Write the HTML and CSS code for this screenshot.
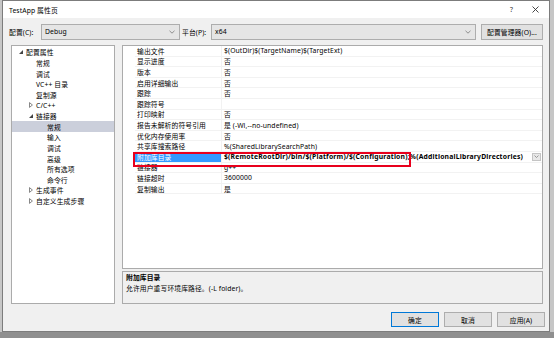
FILE: index.html
```html
<!DOCTYPE html>
<html lang="zh-CN">
<head>
<meta charset="utf-8">
<title>TestApp 属性页</title>
<link rel="stylesheet" href="styles.css">
</head>
<body>
<div class="screen">
  <div class="window">
    <div class="titlebar">
      <span class="title">TestApp 属性页</span>
      <span class="help">?</span>
      <svg class="close" width="7" height="7" viewBox="0 0 7 7"><path d="M0.5 0.5L6.5 6.5M6.5 0.5L0.5 6.5" stroke="#333" stroke-width="0.9" fill="none"/></svg>
    </div>
    <div class="config-row">
      <span class="lbl lbl-config">配置(C):</span>
      <div class="combo combo-config"><span>Debug</span><svg class="chev" width="6" height="4" viewBox="0 0 6 4"><path d="M0.5 0.8L3 3.2L5.5 0.8" stroke="#777" stroke-width="0.8" fill="none"/></svg></div>
      <span class="lbl lbl-platform">平台(P):</span>
      <div class="combo combo-platform"><span>x64</span><svg class="chev" width="6" height="4" viewBox="0 0 6 4"><path d="M0.5 0.8L3 3.2L5.5 0.8" stroke="#777" stroke-width="0.8" fill="none"/></svg></div>
      <div class="btn btn-cfgmgr">配置管理器(O)...</div>
    </div>
    <div class="main">
      <div class="tree">
        <div class="node l0"><span class="tg"><svg width="4" height="4" viewBox="0 0 4 4"><path d="M4 0L4 4L0 4Z" fill="#444"/></svg></span>配置属性</div>
        <div class="node l1"><span class="tg"></span>常规</div>
        <div class="node l1"><span class="tg"></span>调试</div>
        <div class="node l1"><span class="tg"></span>VC++ 目录</div>
        <div class="node l1"><span class="tg"></span>复制源</div>
        <div class="node l1"><span class="tg"><svg width="4" height="6" viewBox="0 0 4 6"><path d="M0.5 0.6L3.4 3L0.5 5.4Z" fill="none" stroke="#555" stroke-width="0.7"/></svg></span>C/C++</div>
        <div class="node l1"><span class="tg"><svg width="4" height="4" viewBox="0 0 4 4"><path d="M4 0L4 4L0 4Z" fill="#444"/></svg></span>链接器</div>
        <div class="node l2 sel"><span class="tg"></span>常规</div>
        <div class="node l2"><span class="tg"></span>输入</div>
        <div class="node l2"><span class="tg"></span>调试</div>
        <div class="node l2"><span class="tg"></span>高级</div>
        <div class="node l2"><span class="tg"></span>所有选项</div>
        <div class="node l2"><span class="tg"></span>命令行</div>
        <div class="node l1"><span class="tg"><svg width="4" height="6" viewBox="0 0 4 6"><path d="M0.5 0.6L3.4 3L0.5 5.4Z" fill="none" stroke="#555" stroke-width="0.7"/></svg></span>生成事件</div>
        <div class="node l1"><span class="tg"><svg width="4" height="6" viewBox="0 0 4 6"><path d="M0.5 0.6L3.4 3L0.5 5.4Z" fill="none" stroke="#555" stroke-width="0.7"/></svg></span>自定义生成步骤</div>
      </div>
      <div class="right">
        <div class="grid">
          <div class="row"><span class="gut"></span><span class="name">输出文件</span><span class="val">$(OutDir)$(TargetName)$(TargetExt)</span></div>
          <div class="row"><span class="gut"></span><span class="name">显示进度</span><span class="val">否</span></div>
          <div class="row"><span class="gut"></span><span class="name">版本</span><span class="val">否</span></div>
          <div class="row"><span class="gut"></span><span class="name">启用详细输出</span><span class="val">否</span></div>
          <div class="row"><span class="gut"></span><span class="name">跟踪</span><span class="val">否</span></div>
          <div class="row"><span class="gut"></span><span class="name">跟踪符号</span><span class="val"></span></div>
          <div class="row"><span class="gut"></span><span class="name">打印映射</span><span class="val">否</span></div>
          <div class="row"><span class="gut"></span><span class="name">报告未解析的符号引用</span><span class="val">是 (-Wl,--no-undefined)</span></div>
          <div class="row"><span class="gut"></span><span class="name">优化内存使用率</span><span class="val">否</span></div>
          <div class="row"><span class="gut"></span><span class="name">共享库搜索路径</span><span class="val">%(SharedLibrarySearchPath)</span></div>
          <div class="row sel"><span class="gut"></span><span class="name">附加库目录</span><span class="val"><span class="bold-val">$(RemoteRootDir)/bin/$(Platform)/$(Configuration);%(AdditionalLibraryDirectories)</span><span class="dd"><svg width="5" height="3" viewBox="0 0 5 3"><path d="M0.5 0.5L2.5 2.5L4.5 0.5" stroke="#777" stroke-width="0.7" fill="none"/></svg></span></span></div>
          <div class="row"><span class="gut"></span><span class="name">链接器</span><span class="val">g++</span></div>
          <div class="row"><span class="gut"></span><span class="name">链接超时</span><span class="val">3600000</span></div>
          <div class="row"><span class="gut"></span><span class="name">复制输出</span><span class="val">是</span></div>
          <div class="mark"></div>
        </div>
        <div class="desc">
          <div class="desc-title">附加库目录</div>
          <div class="desc-text">允许用户重写环境库路径。(-L folder)。</div>
        </div>
      </div>
    </div>
    <div class="actions">
      <div class="btn btn-ok">确定</div>
      <div class="btn">取消</div>
      <div class="btn">应用(A)</div>
    </div>
  </div>
</div>
</body>
</html>
```

FILE: styles.css
```css
html, body {
  margin: 0;
  padding: 0;
}
body {
  width: 554px;
  height: 338px;
  overflow: hidden;
  font-family: "Noto Sans", "Noto Sans CJK SC", sans-serif;
  font-size: 6.8px;
  letter-spacing: 0.1px;
  color: #000;
}
.screen {
  width: 554px;
  height: 338px;
  background: linear-gradient(to bottom, #c6c6c6 0, #c6c6c6 332px, #8f8f8f 332px);
}
.window {
  margin-left: 2px;
  width: 548px;
  height: 332px;
  box-sizing: border-box;
  border: 1px solid #7c7c7c;
  background: #f0f0f0;
  display: flex;
  flex-direction: column;
}
.titlebar {
  height: 17px;
  flex: none;
  background: #fff;
  display: flex;
  align-items: center;
  padding-left: 6px;
}
.title {
  flex: 1;
}
.help {
  margin-right: 19px;
  color: #333;
}
.close {
  margin-right: 10px;
}
.config-row {
  display: flex;
  align-items: center;
  height: 17px;
  margin-top: 5px;
  padding-left: 6px;
  flex: none;
}
.lbl {
  white-space: nowrap;
}
.lbl-config {
  width: 32px;
}
.lbl-platform {
  width: 29px;
  margin-left: 2px;
}
.combo {
  box-sizing: border-box;
  height: 16px;
  border: 1px solid #adadad;
  background: #e5e5e5;
  display: flex;
  align-items: center;
  justify-content: space-between;
  padding: 0 4px 0 3px;
}
.combo-config {
  width: 139px;
}
.combo-platform {
  width: 265px;
}
.btn {
  box-sizing: border-box;
  height: 15px;
  width: 48px;
  border: 1px solid #adadad;
  background: #e1e1e1;
  display: flex;
  align-items: center;
  justify-content: center;
  white-space: nowrap;
}
.btn-cfgmgr {
  width: 62px;
  height: 16px;
  margin-left: 5px;
}
.btn-ok {
  border-color: #0078d7;
}
.main {
  display: flex;
  gap: 7px;
  margin-top: 5px;
  padding-left: 8px;
  height: 259px;
  flex: none;
}
.tree {
  width: 104px;
  box-sizing: border-box;
  border: 1px solid #ababab;
  background: #fff;
  padding-top: 1px;
}
.node {
  height: 10.64px;
  display: flex;
  align-items: center;
  white-space: nowrap;
}
.tg {
  width: 7px;
  flex: none;
  display: flex;
  align-items: center;
}
.l0 {
  padding-left: 7px;
}
.l1 {
  padding-left: 17px;
}
.l2 {
  padding-left: 28px;
}
.node.sel {
  background: #cbcfdb;
}
.right {
  width: 421px;
  display: flex;
  flex-direction: column;
  gap: 2px;
}
.grid {
  height: 224px;
  box-sizing: border-box;
  border: 1px solid #ababab;
  background: #fff;
  position: relative;
}
.row {
  display: flex;
  height: 10.6px;
}
.gut {
  width: 12px;
  flex: none;
}
.name,
.val {
  box-sizing: border-box;
  height: 100%;
  display: flex;
  align-items: center;
  padding-left: 2px;
  border-bottom: 1px solid #f2f2f2;
  white-space: nowrap;
}
.name {
  width: 87px;
  flex: none;
  border-right: 1px solid #f2f2f2;
}
.val {
  flex: 1;
}
.row.sel .name {
  background: #3399ff;
  color: #fff;
}
.row.sel .val {
  justify-content: space-between;
}
.bold-val {
  font-weight: bold;
  letter-spacing: 0.2px;
}
.dd {
  box-sizing: border-box;
  width: 9px;
  height: 8px;
  margin-right: 1px;
  border: 1px solid #c4c4c4;
  background: #e8e8e8;
  display: flex;
  align-items: center;
  justify-content: center;
}
.mark {
  position: absolute;
  left: 10px;
  top: 106px;
  width: 278px;
  height: 15px;
  box-sizing: border-box;
  border: 2px solid #e8001c;
}
.desc {
  height: 33px;
  box-sizing: border-box;
  border: 1px solid #ababab;
  background: #f0f0f0;
  padding: 1px 3px;
  line-height: 10.6px;
}
.desc-title {
  font-weight: bold;
}
.actions {
  display: flex;
  justify-content: flex-end;
  gap: 5px;
  margin-top: 8px;
  padding-right: 4px;
}
```
